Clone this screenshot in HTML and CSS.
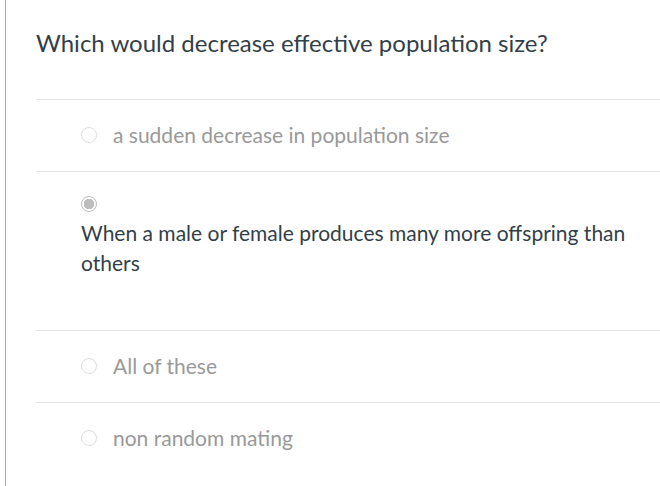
FILE: index.html
```html
<!DOCTYPE html>
<html lang="en">
<head>
    <meta charset="UTF-8">
    <title>Quiz question</title>
    <link rel="stylesheet" href="styles.css">
</head>
<body>
    <div class="pregunta">
        <div class="enunciado">Which would decrease effective population size?</div>
        <div class="respuestas">
            <div class="respuesta">
                <span class="radio"></span>
                <span class="texto">a sudden decrease in population size</span>
            </div>
            <div class="respuesta elegida">
                <span class="radio marcado"></span>
                <div class="texto">When a male or female produces many more offspring than others</div>
            </div>
            <div class="respuesta">
                <span class="radio"></span>
                <span class="texto">All of these</span>
            </div>
            <div class="respuesta">
                <span class="radio"></span>
                <span class="texto">non random mating</span>
            </div>
        </div>
    </div>
</body>
</html>
```

FILE: styles.css
```css
body {
    margin: 0;
    background-color: #fff;
    font-family: Lato, "Open Sans", sans-serif;
}
.pregunta {
    margin-left: 5px;
    border-left: 1px solid #aaa;
    height: 486px;
    padding-left: 30px;
}
.enunciado {
    padding-top: 28px;
    padding-bottom: 41px;
    font-size: 24px;
    line-height: 30px;
    color: #333f48;
}
.respuestas {
    border-top: 1px solid #e4e4e4;
}
.respuesta {
    display: flex;
    align-items: center;
    gap: 16px;
    padding: 20px 0 21px 45px;
    border-bottom: 1px solid #e4e4e4;
    font-size: 21px;
    line-height: 30px;
    color: #999;
}
.respuesta:last-child {
    border-bottom: none;
}
.elegida {
    display: block;
    padding-top: 25px;
    padding-bottom: 52px;
    color: #333f48;
}
.elegida .radio {
    display: block;
    margin-bottom: 6px;
}
.elegida .texto {
    padding-right: 30px;
}
.radio {
    width: 14px;
    height: 14px;
    border: 1px solid #ddd;
    border-radius: 50%;
    box-sizing: content-box;
    flex-shrink: 0;
    margin-top: -1px;
}
.marcado {
    border-color: #bbb;
    background: radial-gradient(circle, #bdbdbd 0 5px, #fff 5.5px);
}
```
